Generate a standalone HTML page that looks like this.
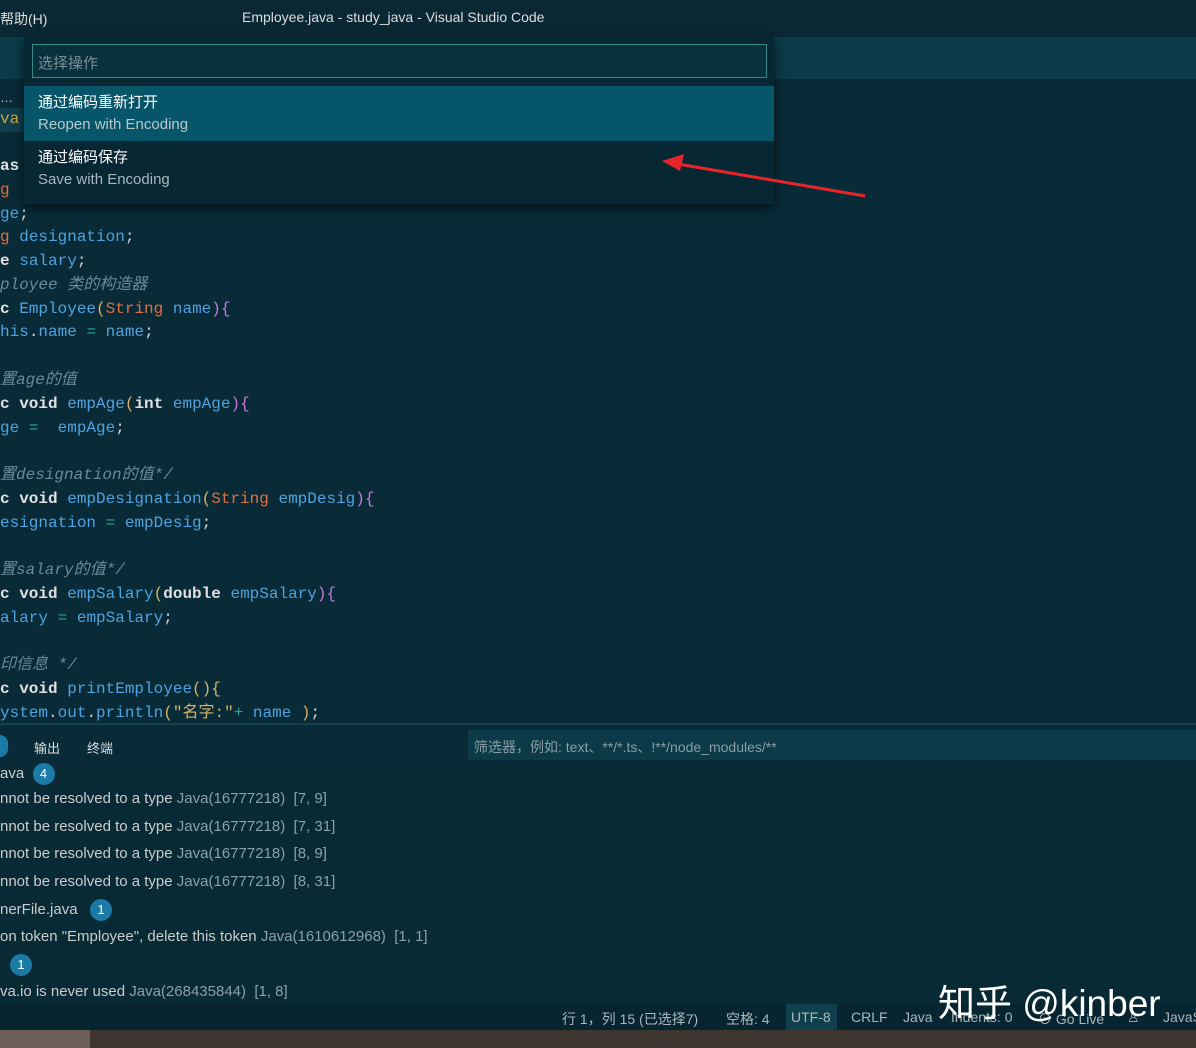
<!DOCTYPE html><html><head><meta charset="utf-8"><style>
*{margin:0;padding:0;box-sizing:border-box}
body{width:1196px;height:1048px;overflow:hidden;background:#08303d;font-family:"Liberation Sans","Noto Sans CJK SC",sans-serif;position:relative;color:#ccc}
.abs{position:absolute;white-space:pre}
.code{font-family:"Liberation Mono","Noto Sans CJK SC",monospace;font-size:16px;color:#d4d4d4}
.k{color:#e0e0e0;font-weight:bold}.t{color:#e07040}.v{color:#4fa3e0}.p{color:#c678dd}.c{color:#6b8a96;font-style:italic}.s{color:#d6b36a}.o{color:#2aa198}
.prob{font-size:15px;color:#ccc}.g{color:#8aa0aa}
.badge{display:inline-block;width:22px;height:22px;border-radius:11px;background:#1b7aa6;color:#fff;text-align:center;font-size:13px;line-height:22px}
.st{position:absolute;top:1009px;font-size:14px;color:#a8b8bc;white-space:pre}
</style></head><body>
<div class="abs" style="left:0;top:0;width:1196px;height:37px;background:#0a2833"></div>
<div class="abs" style="left:0;top:9px;font-size:14px;color:#ddd">帮助(H)</div>
<div class="abs" style="left:242px;top:9px;font-size:14px;color:#ddd">Employee.java - study_java - Visual Studio Code</div>
<div class="abs" style="left:0;top:37px;width:1196px;height:42px;background:#0c3a48"></div>
<div class="abs" style="left:0;top:79px;width:1196px;height:644px;background:#082b37"></div>
<div class="abs" style="left:0;top:90px;font-size:13px;color:#ccc">…</div>
<div class="abs" style="left:0;top:108px;width:24px;height:24px;background:#0f3e4c"></div>
<div class="abs code" style="left:0;top:110px;color:#c9a94a">va</div>
<div class="abs code" style="left:0;top:155px;line-height:23.78px"><span class="k">as</span>
<span class="t">g</span>
<span class="v">ge</span>;
<span class="t">g</span> <span class="v">designation</span>;
<span class="k">e</span> <span class="v">salary</span>;
<span class="c">ployee 类的构造器</span>
<span class="k">c</span> <span class="v">Employee</span><span class="s">(</span><span class="t">String</span> <span class="v">name</span><span class="p">){</span>
<span class="v">his</span>.<span class="v">name</span> <span class="o">=</span> <span class="v">name</span>;

<span class="c">置age的值</span>
<span class="k">c void</span> <span class="v">empAge</span><span class="s">(</span><span class="k">int</span> <span class="v">empAge</span><span class="p">){</span>
<span class="v">ge</span> <span class="o">=</span>  <span class="v">empAge</span>;

<span class="c">置designation的值*/</span>
<span class="k">c void</span> <span class="v">empDesignation</span><span class="s">(</span><span class="t">String</span> <span class="v">empDesig</span><span class="p">){</span>
<span class="v">esignation</span> <span class="o">=</span> <span class="v">empDesig</span>;

<span class="c">置salary的值*/</span>
<span class="k">c void</span> <span class="v">empSalary</span><span class="s">(</span><span class="k">double</span> <span class="v">empSalary</span><span class="p">){</span>
<span class="v">alary</span> <span class="o">=</span> <span class="v">empSalary</span>;

<span class="c">印信息 */</span>
<span class="k">c void</span> <span class="v">printEmployee</span><span class="s">(){</span>
<span class="v">ystem</span>.<span class="v">out</span>.<span class="v">println</span><span class="s">(</span><span class="s">"名字:"</span><span class="o">+</span> <span class="v">name</span> <span class="s">)</span>;</div>
<!-- quick pick -->
<div class="abs" style="left:24px;top:37px;width:750px;height:167px;background:#072733;box-shadow:0 4px 10px rgba(0,0,0,.6)"></div>
<div class="abs" style="left:32px;top:44px;width:735px;height:34px;background:#08303d;border:1px solid #3a8a8a"></div>
<div class="abs" style="left:38px;top:52px;font-size:15px;color:#7a9098">选择操作</div>
<div class="abs" style="left:24px;top:86px;width:750px;height:55px;background:#065568"></div>
<div class="abs" style="left:38px;top:91px;font-size:15px;color:#fff">通过编码重新打开</div>
<div class="abs" style="left:38px;top:116px;font-size:15px;color:#b8c8cc">Reopen with Encoding</div>
<div class="abs" style="left:38px;top:146px;font-size:15px;color:#fff">通过编码保存</div>
<div class="abs" style="left:38px;top:171px;font-size:15px;color:#a8b8bc">Save with Encoding</div>
<svg class="abs" style="left:0;top:0" width="1196" height="1048"><path d="M865 196 L672 163" stroke="#e8252a" stroke-width="3"/><path d="M662 161 L684 154 L680 171 Z" fill="#e8252a"/><path d="M880 953 L822 993" stroke="#e8252a" stroke-width="2.5"/><path d="M814 999 L822 984 L830 993 Z" fill="#e8252a"/></svg>
<!-- panel -->
<div class="abs" style="left:0;top:723px;width:1196px;height:2px;background:#12404e"></div>
<div class="abs" style="left:0;top:725px;width:1196px;height:42px;background:#082b37"></div>
<div class="abs" style="left:0;top:735px;width:8px;height:22px;border-radius:0 11px 11px 0;background:#1b7aa6"></div>
<div class="abs" style="left:34px;top:738px;font-size:13px;color:#ddd">输出</div>
<div class="abs" style="left:87px;top:738px;font-size:13px;color:#ddd">终端</div>
<div class="abs" style="left:468px;top:730px;width:728px;height:30px;background:#0c3a48"></div>
<div class="abs" style="left:474px;top:737px;font-size:14px;color:#8a9ea5">筛选器，例如: text、**/*.ts、!**/node_modules/**</div>
<div class="abs" style="left:0;top:767px;width:1196px;height:237px;background:#072a35"></div>
<div class="abs prob" style="left:0;top:763px">ava  <span class="badge">4</span></div>
<div class="abs prob" style="left:0;top:790px">nnot be resolved to a type <span class="g">Java(16777218)  [7, 9]</span></div>
<div class="abs prob" style="left:0;top:818px">nnot be resolved to a type <span class="g">Java(16777218)  [7, 31]</span></div>
<div class="abs prob" style="left:0;top:845px">nnot be resolved to a type <span class="g">Java(16777218)  [8, 9]</span></div>
<div class="abs prob" style="left:0;top:873px">nnot be resolved to a type <span class="g">Java(16777218)  [8, 31]</span></div>
<div class="abs prob" style="left:0;top:899px">nerFile.java   <span class="badge">1</span></div>
<div class="abs prob" style="left:0;top:928px">on token "Employee", delete this token <span class="g">Java(1610612968)  [1, 1]</span></div>
<div class="abs prob" style="left:10px;top:954px"><span class="badge">1</span></div>
<div class="abs prob" style="left:0;top:983px">va.io is never used <span class="g">Java(268435844)  [1, 8]</span></div>
<!-- status -->
<div class="abs" style="left:0;top:1004px;width:1196px;height:26px;background:#062531"></div>
<div class="abs" style="left:786px;top:1004px;width:51px;height:26px;background:#10404d"></div>
<div class="st" style="left:562px">行 1，列 15 (已选择7)</div>
<div class="st" style="left:726px">空格: 4</div>
<div class="st" style="left:791px">UTF-8</div>
<div class="st" style="left:851px">CRLF</div>
<div class="st" style="left:903px">Java</div>
<div class="st" style="left:951px">Indents: 0</div>
<div class="st" style="left:1038px">⊙ Go Live</div>
<div class="st" style="left:1127px">♙</div>
<div class="st" style="left:1163px">JavaS</div>
<div class="abs" style="left:938px;top:973px;font-size:37px;color:#fff">知乎 @kinber</div>
<div class="abs" style="left:0;top:1030px;width:1196px;height:18px;background:#3e3430"></div>
<div class="abs" style="left:0;top:1030px;width:90px;height:18px;background:#6e5e58"></div>
</body></html>
